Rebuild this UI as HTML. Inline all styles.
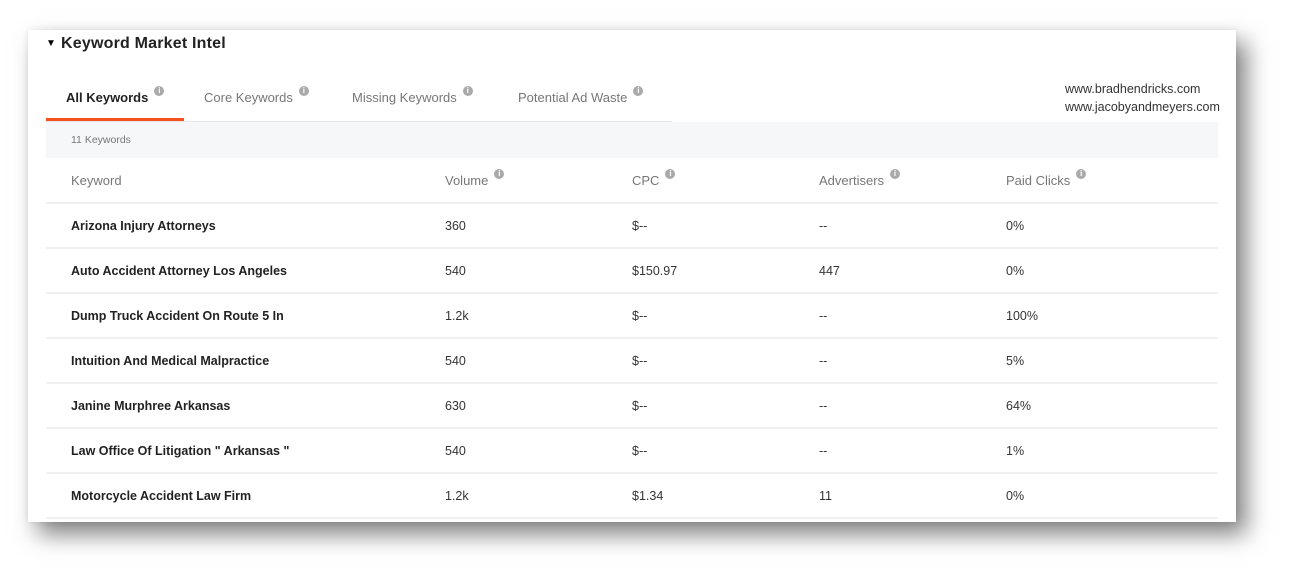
<!DOCTYPE html><html><head><style>
body{margin:0;width:1290px;height:568px;background:#fff;font-family:"Liberation Sans",sans-serif;position:relative;overflow:hidden}
.card{position:absolute;left:28px;top:30px;width:1208px;height:492px;background:#fff;box-shadow:10px 12px 22px rgba(0,0,0,.5),0 0 6px rgba(0,0,0,.08)}
.abs{position:absolute;white-space:nowrap}
.i{display:inline-block;width:10px;height:10px;border-radius:50%;background:#aaa;color:#fff;font-size:8px;line-height:10px;text-align:center;font-weight:bold;vertical-align:top;margin-left:6px;margin-top:-4px}
.tab{font-size:13px;color:#777;top:91px}
.row{position:absolute;left:18px;width:1172px;height:45px;border-bottom:2px solid #f0f0f0}
.row span{position:absolute;top:15px;font-size:12.5px;color:#333}
.row span.k{font-weight:bold;color:#222}
</style></head><body>
<div class="card">
<div class="abs" style="left:18px;top:8px;font-size:10px">&#9660;</div>
<div class="abs" style="left:33px;top:5px;font-size:16px;color:#222;font-weight:bold;letter-spacing:.2px">Keyword Market Intel</div>
<div class="abs tab" style="left:38px;top:60px;color:#222;font-weight:bold">All Keywords<span class="i">i</span></div>
<div class="abs tab" style="left:176px;top:60px">Core Keywords<span class="i">i</span></div>
<div class="abs tab" style="left:324px;top:60px">Missing Keywords<span class="i">i</span></div>
<div class="abs tab" style="left:490px;top:60px">Potential Ad Waste<span class="i">i</span></div>
<div class="abs" style="left:18px;top:91px;width:626px;height:1px;background:#e6e6e6"></div>
<div class="abs" style="left:18px;top:88px;width:138px;height:3px;background:#f5501e"></div>
<div class="abs" style="left:1037px;top:50px;font-size:12.5px;color:#333;line-height:18px">www.bradhendricks.com<br>www.jacobyandmeyers.com</div>
<div class="abs" style="left:18px;top:92px;width:1172px;height:36px;background:#f6f7f9"></div>
<div class="abs" style="left:43px;top:104px;font-size:10.5px;color:#777">11 Keywords</div>
<div class="row" style="top:128px;height:44px"><span style="left:25px;color:#777;font-size:13px">Keyword</span><span style="left:399px;color:#777;font-size:13px">Volume<b class="i">i</b></span><span style="left:586px;color:#777;font-size:13px">CPC<b class="i">i</b></span><span style="left:773px;color:#777;font-size:13px">Advertisers<b class="i">i</b></span><span style="left:960px;color:#777;font-size:13px">Paid Clicks<b class="i">i</b></span></div>
<div class="row" style="top:174px;height:43px"><span class="k" style="left:25px">Arizona Injury Attorneys</span><span style="left:399px">360</span><span style="left:586px">$--</span><span style="left:773px">--</span><span style="left:960px">0%</span></div>
<div class="row" style="top:219px;height:43px"><span class="k" style="left:25px">Auto Accident Attorney Los Angeles</span><span style="left:399px">540</span><span style="left:586px">$150.97</span><span style="left:773px">447</span><span style="left:960px">0%</span></div>
<div class="row" style="top:264px;height:43px"><span class="k" style="left:25px">Dump Truck Accident On Route 5 In</span><span style="left:399px">1.2k</span><span style="left:586px">$--</span><span style="left:773px">--</span><span style="left:960px">100%</span></div>
<div class="row" style="top:309px;height:43px"><span class="k" style="left:25px">Intuition And Medical Malpractice</span><span style="left:399px">540</span><span style="left:586px">$--</span><span style="left:773px">--</span><span style="left:960px">5%</span></div>
<div class="row" style="top:354px;height:43px"><span class="k" style="left:25px">Janine Murphree Arkansas</span><span style="left:399px">630</span><span style="left:586px">$--</span><span style="left:773px">--</span><span style="left:960px">64%</span></div>
<div class="row" style="top:399px;height:43px"><span class="k" style="left:25px">Law Office Of Litigation " Arkansas "</span><span style="left:399px">540</span><span style="left:586px">$--</span><span style="left:773px">--</span><span style="left:960px">1%</span></div>
<div class="row" style="top:444px;height:43px"><span class="k" style="left:25px">Motorcycle Accident Law Firm</span><span style="left:399px">1.2k</span><span style="left:586px">$1.34</span><span style="left:773px">11</span><span style="left:960px">0%</span></div>
</div>
</body></html>
